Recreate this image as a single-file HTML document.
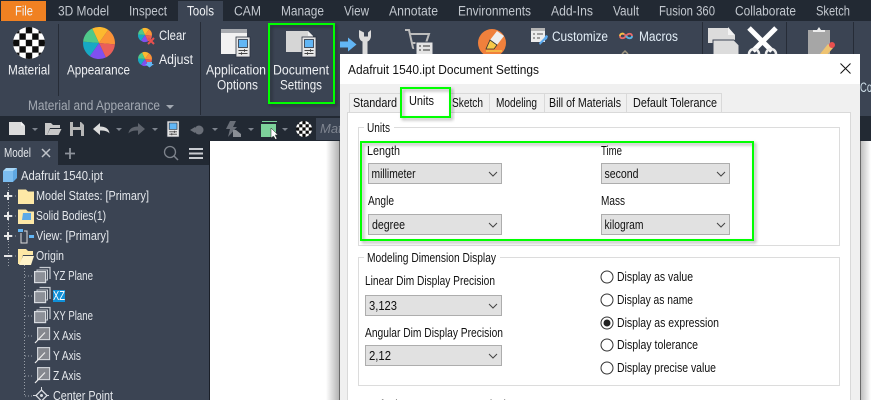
<!DOCTYPE html>
<html><head><meta charset="utf-8"><style>
html,body{margin:0;padding:0;background:#fff;width:871px;height:400px;overflow:hidden}
svg{display:block}
text{font-family:"Liberation Sans",sans-serif;font-size:13px;white-space:pre}
.t{fill:#c3c8cf;font-size:13.5px}
.w{fill:#eef0f3;font-size:13.5px}
.k{fill:#111;font-size:13px}
.n{fill:#e4e7eb;font-size:13px}
</style></head><body>
<svg xmlns="http://www.w3.org/2000/svg" width="871" height="400" viewBox="0 0 871 400">
<defs>
<linearGradient id="gl" x1="0" x2="1" y1="0" y2="0"><stop offset="0" stop-color="#fff"/><stop offset="1" stop-color="#b4b4b4"/></linearGradient>
<linearGradient id="gr" x1="0" x2="1" y1="0" y2="0"><stop offset="0" stop-color="#c0c0c0"/><stop offset="1" stop-color="#fff"/></linearGradient>
<clipPath id="ball"><circle cx="0" cy="0" r="16"/></clipPath>
<filter id="sh" x="-10%" y="-20%" width="120%" height="140%"><feDropShadow dx="2" dy="2" stdDeviation="1.6" flood-color="#000" flood-opacity=".35"/></filter>
<g id="wheel">
<path d="M0 0L-6.8-14.5A16 16 0 0 1 9.2-13.1Z" fill="#fdb92f"/>
<path d="M0 0L9.2-13.1A16 16 0 0 1 15.9 1.4Z" fill="#fb9338"/>
<path d="M0 0L15.9 1.4A16 16 0 0 1 6.8 14.5Z" fill="#ea5f59"/>
<path d="M0 0L6.8 14.5A16 16 0 0 1-9.2 13.1Z" fill="#8050f0"/>
<path d="M0 0L-9.2 13.1A16 16 0 0 1-15.9-1.4Z" fill="#17a9c4"/>
<path d="M0 0L-15.9-1.4A16 16 0 0 1-6.8-14.5Z" fill="#4fc98a"/>
</g>
<g id="checker">
<circle r="16" fill="#fff"/>
<g clip-path="url(#ball)" fill="#0c0c0c">
<path d="M-3.200-16h6.400v6.400h-6.400zM-9.600-9.600h6.400v6.400h-6.400zM3.200-9.600h6.400v6.400h-6.400zM-16-3.200h6.400v6.400h-6.400zM-3.200-3.200h6.400v6.400h-6.400zM9.600-3.200h6.400v6.400h-6.400zM-9.600 3.200h6.400v6.400h-6.400zM3.200 3.200h6.400v6.400h-6.400zM-3.200 9.600h6.400v6.400h-6.400zM-16-16h6.400v6.400h-6.400zM9.600-16h6.400v6.400h-6.400zM-16 9.600h6.400v6.400h-6.400zM9.600 9.600h6.400v6.400h-6.400z"/>
</g>
</g>
<g id="dev">
<rect x="0" y="0" width="14" height="20" fill="#e6e6e6" stroke="#2c3340" stroke-width=".8"/>
<rect x="2.500" y="2.500" width="9" height="8" fill="#62b6f5" stroke="#2c3340" stroke-width=".8"/>
<path d="M2.500 13.500h9M2.500 16.500h9" stroke="#444" stroke-width="1"/>
<path d="M8.500 12.200v2.600M5.500 15.200v2.600" stroke="#444" stroke-width="1"/>
</g>
<path id="chev" d="M0 0l4 4 4-4" fill="none" stroke="#444" stroke-width="1"/>
<g id="plane">
<path d="M5.500 .5H16V12" fill="none" stroke="#c8ccd2" stroke-width="1.200"/>
<path d="M3 3H13.500V13H3Z" fill="none" stroke="#c8ccd2" stroke-width="1"/>
<rect x=".6" y="4.600" width="11" height="11" fill="#8b8f97" stroke="#d8dbe0" stroke-width="1.200"/>
</g>
<g id="axis">
<rect x="3.600" y=".6" width="12" height="12" fill="#85888f" stroke="#d4d7dc" stroke-width="1.100"/>
<path d="M1 16L11 5.500" stroke="#eee" stroke-width="1.200"/>
</g>
<g id="folder">
<path d="M0 2h8l2 2h6v12.500H0Z" fill="#fde8a6"/>
</g>
<path id="car" d="M0 0h6l-3 3z" fill="#7d838d"/>
</defs>

<!-- base -->
<rect width="871" height="400" fill="#fff"/>
<rect x="0" y="0" width="871" height="21" fill="#222933"/>
<rect x="0" y="21" width="871" height="95" fill="#3b4453"/>
<rect x="0" y="116" width="871" height="25" fill="#222933"/>
<rect x="0" y="141" width="209" height="259" fill="#3b4453"/>
<rect x="0" y="141" width="209" height="24" fill="#222933"/>
<rect x="0" y="141" width="58" height="24" fill="#3b4453"/>
<rect x="209" y="141" width="1" height="259" fill="#1a1f28"/>
<rect x="326" y="141" width="13" height="259" fill="url(#gl)"/>
<rect x="861" y="141" width="10" height="259" fill="url(#gr)"/>

<!-- top tabs -->
<rect x="1" y="1" width="45" height="20" fill="#f08122"/>
<rect x="178" y="1" width="45" height="20" fill="#3b4453"/>
<text x="15" y="15.500" class="w" fill="#fff" textLength="18" lengthAdjust="spacingAndGlyphs">File</text>
<text x="58" y="15.500" class="t" textLength="51" lengthAdjust="spacingAndGlyphs">3D Model</text>
<text x="129" y="15.500" class="t" textLength="38" lengthAdjust="spacingAndGlyphs">Inspect</text>
<text x="187" y="15.500" class="w" textLength="27" lengthAdjust="spacingAndGlyphs">Tools</text>
<text x="234" y="15.500" class="t" textLength="27" lengthAdjust="spacingAndGlyphs">CAM</text>
<text x="281" y="15.500" class="t" textLength="43" lengthAdjust="spacingAndGlyphs">Manage</text>
<text x="344" y="15.500" class="t" textLength="25" lengthAdjust="spacingAndGlyphs">View</text>
<text x="389" y="15.500" class="t" textLength="49" lengthAdjust="spacingAndGlyphs">Annotate</text>
<text x="458" y="15.500" class="t" textLength="73" lengthAdjust="spacingAndGlyphs">Environments</text>
<text x="551" y="15.500" class="t" textLength="42" lengthAdjust="spacingAndGlyphs">Add-Ins</text>
<text x="613" y="15.500" class="t" textLength="26" lengthAdjust="spacingAndGlyphs">Vault</text>
<text x="659" y="15.500" class="t" textLength="56" lengthAdjust="spacingAndGlyphs">Fusion 360</text>
<text x="735" y="15.500" class="t" textLength="61" lengthAdjust="spacingAndGlyphs">Collaborate</text>
<text x="816" y="15.500" class="t" textLength="34" lengthAdjust="spacingAndGlyphs">Sketch</text>

<!-- ribbon icons left -->
<use href="#checker" transform="translate(29,43)"/>
<rect x="58" y="24" width="1" height="72" fill="#262c37"/>
<use href="#wheel" transform="translate(99,43)"/>
<use href="#wheel" transform="translate(145,35) scale(.44)"/>
<path d="M148 38l6 6M154 38l-6 6" stroke="#e8504f" stroke-width="2"/>
<use href="#wheel" transform="translate(145,59) scale(.44)"/>
<path d="M147 62h5v2h2l-4.500 3.500-4.500-3.500h2z" fill="#62b6f5"/>
<rect x="200" y="22" width="1" height="93" fill="#262c37"/>

<text x="8" y="74.500" class="w" textLength="42" lengthAdjust="spacingAndGlyphs">Material</text>
<text x="67" y="74.500" class="w" textLength="63" lengthAdjust="spacingAndGlyphs">Appearance</text>
<text x="159" y="40" class="w" textLength="27" lengthAdjust="spacingAndGlyphs">Clear</text>
<text x="159" y="64" class="w" textLength="34" lengthAdjust="spacingAndGlyphs">Adjust</text>
<text x="28" y="110" class="t" style="fill:#a3a9b2" textLength="132" lengthAdjust="spacingAndGlyphs">Material and Appearance</text>
<path d="M166 105h8l-4 4z" fill="#a3a9b2"/>

<!-- app options -->
<rect x="221" y="29" width="26" height="25" fill="#f2f2f2"/>
<rect x="221" y="29" width="26" height="4" fill="#a8abb0"/>
<use href="#dev" transform="translate(236,37)"/>
<text x="206" y="74.500" class="w" textLength="60" lengthAdjust="spacingAndGlyphs">Application</text>
<text x="217" y="89.500" class="w" textLength="41" lengthAdjust="spacingAndGlyphs">Options</text>
<!-- doc settings -->
<path d="M286 31h22l5 5v16h-27z" fill="#d6d6d6"/>
<path d="M308 31l5 5h-5z" fill="#f2f2f2"/>
<use href="#dev" transform="translate(302,37)"/>
<text x="273" y="74.500" class="w" textLength="56" lengthAdjust="spacingAndGlyphs">Document</text>
<text x="280" y="89.500" class="w" textLength="42" lengthAdjust="spacingAndGlyphs">Settings</text>
<rect x="269" y="24" width="65" height="79" fill="none" stroke="#00ff00" stroke-width="2" filter="url(#sh)"/>

<!-- ribbon icons right -->
<path d="M340 41.500h8v-4l8.500 7-8.500 7v-4h-8z" fill="#62b6f5"/>
<path d="M359 30v6c0 3 2 5 3.500 5.500V54h5V41.500c1.500-.5 3.500-2.500 3.500-5.500v-6l-3 2.500v4h-4v-4z" fill="#dcdcdc"/>
<path d="M405 30h4l4 18h-.5M409 34h20l-3 9h-15" fill="none" stroke="#bdbdbd" stroke-width="2"/>
<rect x="416" y="42" width="17" height="14" fill="#e4e4e4" stroke="#3b4453"/>
<path d="M419 46h2M423 46h7M419 50h2M423 50h7" stroke="#555" stroke-width="1.200"/>
<circle cx="492" cy="43" r="14" fill="#f0803c"/>
<path d="M490 40l7-9 7 5-7 9z" fill="#eee"/>
<path d="M490 40l7 5-3 4h-8z" fill="#f7c948" stroke="#333" stroke-width=".8"/>
<path d="M486 51h16" stroke="#f7c948" stroke-width="1.500"/>
<rect x="531" y="28" width="14" height="14" fill="#ececec"/>
<rect x="531" y="28" width="14" height="3" fill="#b5b5b5"/>
<path d="M533 34h2M537 34h6M533 38h2M537 38h3" stroke="#555"/>
<path d="M539 43l5-5 2-3 2 1-1 3-3 2-4 4z" fill="#5aa9ee"/>
<text x="552" y="41" class="w" textLength="56" lengthAdjust="spacingAndGlyphs" style="fill:#e3eef7">Customize</text>
<path d="M626 36c-2-3-6-3-6 0s4 3 6 0 6-3 6 0-4 3-6 0z" fill="none" stroke="#e86a6a" stroke-width="1.800"/>
<path d="M626 36c2 3 6 3 6 0" fill="none" stroke="#53b7e8" stroke-width="1.800"/>
<path d="M620 36c0-2 2-3 4-2" fill="none" stroke="#f5c142" stroke-width="1.800"/>
<text x="639" y="41" class="w" textLength="39" lengthAdjust="spacingAndGlyphs" style="fill:#e3eef7">Macros</text>
<path d="M622 54l3-3 3 3" fill="none" stroke="#a09680" stroke-width="1.500"/>
<rect x="702" y="22" width="1" height="34" fill="#262c37"/>
<rect x="786" y="22" width="1" height="34" fill="#262c37"/>
<rect x="853" y="22" width="1" height="93" fill="#262c37"/>
<path d="M708 28h20l7 7v8h-27z" fill="#dcdcdc"/>
<path d="M728 27l7 8h-7z" fill="#f2f2f2"/>
<path d="M713 40h21l5 5v11h-26z" fill="#dcdcdc" stroke="#3b4453" stroke-width="1"/>
<path d="M749 28L772 51M776 28L753 51" stroke="#fff" stroke-width="5"/>
<circle cx="754" cy="54" r="5" fill="none" stroke="#eee" stroke-width="2.500"/>
<circle cx="771" cy="54" r="5" fill="none" stroke="#eee" stroke-width="2.500"/>
<rect x="808" y="30" width="22" height="26" fill="#a6a6a6"/>
<path d="M813 32h12v-2h-4l-2-3-2 3h-4z" fill="#ececec"/>
<path d="M820 54l8-10 5 4-7 8z" fill="#eec371"/>
<circle cx="832" cy="45" r="3" fill="#e8504f"/>
<text x="860" y="92" class="w" style="fill:#cfe0ea" textLength="20" lengthAdjust="spacingAndGlyphs">Cont</text>

<!-- toolbar -->
<path d="M9 122h12l4 4v9H9z" fill="#dcdcdc"/>
<path d="M21 121.500l4 4h-4z" fill="#f4f4f4"/>
<use href="#car" transform="translate(32,128)"/>
<path d="M45 123h6l2 2h7v3H50l-3 7h-2z" fill="#c8c8c8"/>
<path d="M50 129h11.500l-3 6H47z" fill="#c8c8c8"/>
<path d="M70 122h11l3 3v11H70z" fill="#b7b7b7"/>
<rect x="73" y="122" width="7" height="5" fill="#222933"/>
<rect x="73" y="130" width="8" height="6" fill="#222933"/>
<path d="M93 129l7-6v3.500c5 0 9 2 9.500 7-2-2.500-5-3-9.500-3v4.500z" fill="#dcdcdc"/>
<use href="#car" transform="translate(116,128)"/>
<path d="M145 129l-7-6v3.500c-5 0-9 2-9.500 7 2-2.500 5-3 9.500-3v4.500z" fill="#5e636c"/>
<use href="#car" transform="translate(152,128)"/>
<g transform="translate(167,121) scale(.87,.8)"><use href="#dev"/></g>
<path d="M190 130l5-3v6z" fill="#6a6f78"/>
<circle cx="199" cy="130" r="4.500" fill="#6a6f78"/>
<use href="#car" transform="translate(212,128)"/>
<path d="M230 121h6l-3 6h4l-9 10 2-8h-4z" fill="#6a6f78"/>
<path d="M233 130h3l5 4v3h-8z" fill="#8a8e95"/>
<use href="#car" transform="translate(248,128)"/>
<rect x="261" y="124" width="15" height="13" fill="#7dd29a"/>
<rect x="262" y="121" width="15" height="1" fill="#7dd29a"/>
<path d="M271 128v10l2.500-2 2 3.500 1.500-1-2-3.500h3z" fill="#fff" stroke="#222" stroke-width=".5"/>
<use href="#car" transform="translate(282,128)"/>
<use href="#checker" transform="translate(304,129) scale(.5)"/>
<rect x="316" y="118" width="24" height="22" fill="#3b4453"/>
<text x="320" y="133" style="fill:#7f8590;font-style:italic;font-size:13px">Mat</text>

<!-- browser header -->
<text x="4" y="157" class="n" textLength="27" lengthAdjust="spacingAndGlyphs">Model</text>
<path d="M42 149l8 8M50 149l-8 8" stroke="#bfc3c9" stroke-width="1.500"/>
<path d="M70 148v11M65 153.500h10" stroke="#8d929b" stroke-width="1.800"/>
<circle cx="170" cy="152" r="5.500" fill="none" stroke="#7e838c" stroke-width="1.300"/>
<path d="M174 156l4 4" stroke="#7e838c" stroke-width="1.500"/>
<path d="M189 149h14M189 153.500h14M189 158h14" stroke="#c9ccd1" stroke-width="2"/>

<!-- tree -->
<path d="M8.500 184V267" stroke="#9aa0a8" stroke-width="1" stroke-dasharray="1 2"/>
<path d="M24.500 265V396" stroke="#9aa0a8" stroke-width="1" stroke-dasharray="1 2"/>
<path d="M12 196h6M12 216h6M12 236h6M12 256h6M25 276h8M25 296h8M25 316h8M25 336h8M25 356h8M25 376h8M25 396h8" stroke="#9aa0a8" stroke-width="1" stroke-dasharray="1 2"/>
<path d="M3 171h10v11H3z" fill="#7cbdf0"/>
<path d="M13 171l4-3v10l-4 4z" fill="#5fa8e3"/>
<path d="M3 171l3-3h11l-4 3z" fill="#a9d8f8"/>
<text x="21" y="180" class="n" textLength="82" lengthAdjust="spacingAndGlyphs">Adafruit 1540.ipt</text>

<path d="M4 196h8M8 192v8" stroke="#e8e8e8" stroke-width="2"/>
<use href="#folder" transform="translate(18,187.500)"/>
<text x="36" y="200" class="n" textLength="113" lengthAdjust="spacingAndGlyphs">Model States: [Primary]</text>

<path d="M4 216h8M8 212v8" stroke="#e8e8e8" stroke-width="2"/>
<use href="#folder" transform="translate(18,207.500)"/>
<path d="M23 213h8v7h-9z" fill="#5da9e6"/>
<text x="36" y="220" class="n" textLength="70" lengthAdjust="spacingAndGlyphs">Solid Bodies(1)</text>

<path d="M4 236h8M8 232v8" stroke="#e8e8e8" stroke-width="2"/>
<path d="M18 229h5v3h-5z" fill="#62b6f5"/>
<path d="M29 235h5v3h-5z" fill="#62b6f5"/>
<path d="M24 231h3v12h-3M21 233v10h3" fill="none" stroke="#ddd" stroke-width="1"/>
<text x="36" y="240" class="n" textLength="73" lengthAdjust="spacingAndGlyphs">View: [Primary]</text>

<path d="M4 256h8" stroke="#e8e8e8" stroke-width="2"/>
<path d="M18 249h8l2 2h5v4H23l-3 9h-2z" fill="#fde8a6"/>
<path d="M23 256h11l-3 9H19z" fill="#fff3c9"/>
<text x="36" y="260" class="n" textLength="28" lengthAdjust="spacingAndGlyphs">Origin</text>

<use href="#plane" transform="translate(34,267)"/>
<text x="53" y="280" class="n" textLength="40" lengthAdjust="spacingAndGlyphs">YZ Plane</text>
<use href="#plane" transform="translate(34,287)"/>
<rect x="53" y="290" width="12" height="12" fill="#0f90d8"/>
<text x="53" y="300" class="n" style="fill:#fff" textLength="12" lengthAdjust="spacingAndGlyphs">XZ</text>
<use href="#plane" transform="translate(34,307)"/>
<text x="53" y="320" class="n" textLength="40" lengthAdjust="spacingAndGlyphs">XY Plane</text>
<use href="#axis" transform="translate(34,327)"/>
<text x="53" y="340" class="n" textLength="28" lengthAdjust="spacingAndGlyphs">X Axis</text>
<use href="#axis" transform="translate(34,347)"/>
<text x="53" y="360" class="n" textLength="28" lengthAdjust="spacingAndGlyphs">Y Axis</text>
<use href="#axis" transform="translate(34,367)"/>
<text x="53" y="380" class="n" textLength="28" lengthAdjust="spacingAndGlyphs">Z Axis</text>
<path d="M41.500 390l5.500 5.500-5.500 5.500-5.500-5.500z" fill="none" stroke="#d8dbe0" stroke-width="1.300"/>
<path d="M33 395.500h4M46 395.500h3M41.500 387v3" stroke="#d8dbe0"/>
<circle cx="41.500" cy="395.500" r="1.500" fill="#d8dbe0"/>
<text x="53" y="400" class="n" textLength="60" lengthAdjust="spacingAndGlyphs">Center Point</text>

<!-- dialog -->
<rect x="339" y="141" width="1" height="259" fill="#6a6a6a"/>
<rect x="860" y="141" width="1" height="259" fill="#6a6a6a"/>
<rect x="340" y="54" width="520" height="346" fill="#f0f0f0"/>
<rect x="340" y="54" width="520" height="30" fill="#fff"/>
<text x="348" y="74" class="k" textLength="191" lengthAdjust="spacingAndGlyphs">Adafruit 1540.ipt Document Settings</text>
<path d="M840.500 63.500l10 10M850.500 63.500l-10 10" stroke="#111" stroke-width="1"/>

<!-- panel -->
<rect x="347.500" y="112.500" width="503" height="290" fill="#fff" stroke="#d9d9d9"/>
<!-- tabs -->
<rect x="349.500" y="93.500" width="51" height="19" fill="#f0f0f0" stroke="#d9d9d9"/>
<rect x="449.500" y="93.500" width="40" height="19" fill="#f0f0f0" stroke="#d9d9d9"/>
<rect x="489.500" y="93.500" width="55" height="19" fill="#f0f0f0" stroke="#d9d9d9"/>
<rect x="544.500" y="93.500" width="82" height="19" fill="#f0f0f0" stroke="#d9d9d9"/>
<rect x="626.500" y="93.500" width="95" height="19" fill="#f0f0f0" stroke="#d9d9d9"/>
<rect x="401" y="89" width="48" height="25" fill="#fff"/>
<text x="353" y="107" class="k" textLength="44" lengthAdjust="spacingAndGlyphs">Standard</text>
<text x="409" y="105" class="k" textLength="25" lengthAdjust="spacingAndGlyphs">Units</text>
<text x="452" y="107" class="k" textLength="31" lengthAdjust="spacingAndGlyphs">Sketch</text>
<text x="496" y="107" class="k" textLength="41" lengthAdjust="spacingAndGlyphs">Modeling</text>
<text x="549" y="107" class="k" textLength="72" lengthAdjust="spacingAndGlyphs">Bill of Materials</text>
<text x="633" y="107" class="k" textLength="84" lengthAdjust="spacingAndGlyphs">Default Tolerance</text>
<rect x="401" y="88" width="49" height="29" fill="none" stroke="#00ff00" stroke-width="2" filter="url(#sh)"/>

<!-- units group -->
<rect x="358.500" y="127.500" width="481" height="118" fill="#fff" stroke="#dcdcdc"/>
<rect x="364" y="124" width="30" height="8" fill="#fff"/>
<text x="367" y="132" class="k" textLength="23" lengthAdjust="spacingAndGlyphs">Units</text>
<text x="367" y="155" class="k" textLength="33" lengthAdjust="spacingAndGlyphs">Length</text>
<text x="601" y="155" class="k" textLength="21" lengthAdjust="spacingAndGlyphs">Time</text>
<rect x="368.500" y="163.500" width="133" height="20" fill="#e1e1e1" stroke="#adadad"/>
<text x="371.500" y="178" class="k" textLength="44" lengthAdjust="spacingAndGlyphs">millimeter</text>
<use href="#chev" transform="translate(489,172)"/>
<rect x="601.500" y="163.500" width="128" height="20" fill="#e1e1e1" stroke="#adadad"/>
<text x="604.500" y="178" class="k" textLength="34" lengthAdjust="spacingAndGlyphs">second</text>
<use href="#chev" transform="translate(717,172)"/>
<text x="368" y="205" class="k" textLength="26" lengthAdjust="spacingAndGlyphs">Angle</text>
<text x="601" y="205" class="k" textLength="24" lengthAdjust="spacingAndGlyphs">Mass</text>
<rect x="368.500" y="214.500" width="133" height="20" fill="#e1e1e1" stroke="#adadad"/>
<text x="372" y="229" class="k" textLength="33" lengthAdjust="spacingAndGlyphs">degree</text>
<use href="#chev" transform="translate(489,223)"/>
<rect x="601.500" y="214.500" width="128" height="20" fill="#e1e1e1" stroke="#adadad"/>
<text x="604.500" y="229" class="k" textLength="39" lengthAdjust="spacingAndGlyphs">kilogram</text>
<use href="#chev" transform="translate(717,223)"/>
<rect x="361" y="142" width="392" height="98" fill="none" stroke="#00ff00" stroke-width="2" filter="url(#sh)"/>

<!-- modeling group -->
<rect x="358.500" y="257.500" width="481" height="128" fill="#fff" stroke="#dcdcdc"/>
<rect x="364" y="254" width="136" height="8" fill="#fff"/>
<text x="367" y="262" class="k" textLength="129" lengthAdjust="spacingAndGlyphs">Modeling Dimension Display</text>
<text x="365" y="285" class="k" textLength="130" lengthAdjust="spacingAndGlyphs">Linear Dim Display Precision</text>
<rect x="365.500" y="295.500" width="136" height="20" fill="#e1e1e1" stroke="#adadad"/>
<text x="369" y="310" class="k" textLength="28" lengthAdjust="spacingAndGlyphs">3,123</text>
<use href="#chev" transform="translate(489,304)"/>
<text x="365" y="337" class="k" textLength="138" lengthAdjust="spacingAndGlyphs">Angular Dim Display Precision</text>
<rect x="365.500" y="345.500" width="136" height="20" fill="#e1e1e1" stroke="#adadad"/>
<text x="369" y="360" class="k" textLength="22" lengthAdjust="spacingAndGlyphs">2,12</text>
<use href="#chev" transform="translate(489,354)"/>

<g fill="#fff" stroke="#333" stroke-width="1">
<circle cx="607" cy="277" r="6"/><circle cx="607" cy="300" r="6"/><circle cx="607" cy="323" r="6"/><circle cx="607" cy="345" r="6"/><circle cx="607" cy="368" r="6"/>
</g>
<circle cx="607" cy="323" r="3.500" fill="#222"/>
<text x="617" y="281" class="k" textLength="76" lengthAdjust="spacingAndGlyphs">Display as value</text>
<text x="617" y="304" class="k" textLength="76" lengthAdjust="spacingAndGlyphs">Display as name</text>
<text x="617" y="327" class="k" textLength="102" lengthAdjust="spacingAndGlyphs">Display as expression</text>
<text x="617" y="349" class="k" textLength="81" lengthAdjust="spacingAndGlyphs">Display tolerance</text>
<text x="617" y="372" class="k" textLength="99" lengthAdjust="spacingAndGlyphs">Display precise value</text>
<text x="367" y="409" class="k" textLength="150" lengthAdjust="spacingAndGlyphs">Default Parameter Input Display</text>
</svg>
</body></html>
